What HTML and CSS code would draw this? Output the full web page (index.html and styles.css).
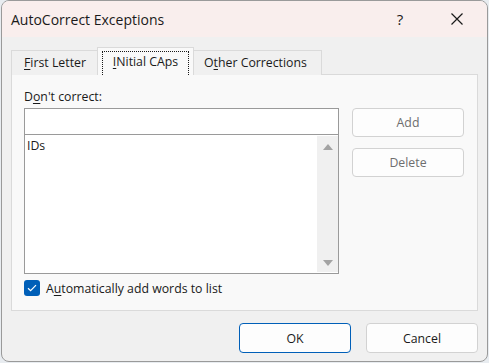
FILE: index.html
```html
<!DOCTYPE html>
<html lang="en">
<head>
  <meta charset="UTF-8" />
  <title>AutoCorrect Exceptions</title>
  <link rel="stylesheet" href="styles.css">
</head>
<body>

  <div class="window">
    <div class="titlebar">
      <span class="title">AutoCorrect Exceptions</span>
      <span class="help">?</span>
      <span class="close">
        <svg width="12" height="12" viewBox="0 0 12 12"><path d="M0.5 0.5 L11.5 11.5 M11.5 0.5 L0.5 11.5" stroke="#1a1a1a" stroke-width="1.2" fill="none"/></svg>
      </span>
    </div>

    <div class="content">
      <div class="tabs">
        <div class="tab"><u>F</u>irst Letter</div>
        <div class="tab active"><span class="focus"><u>I</u>Nitial CAps</span></div>
        <div class="tab">O<u>t</u>her Corrections</div>
      </div>

      <div class="panel">
        <div class="label">D<u>o</u>n't correct:</div>
        <div class="editor">
          <div class="fields">
            <div class="textbox"></div>
            <div class="listbox">
              <div class="items">IDs</div>
              <div class="scrollbar">
                <span class="arrow up"></span>
                <span class="arrow down"></span>
              </div>
            </div>
          </div>
          <div class="side">
            <button class="btn disabled">Add</button>
            <button class="btn disabled">Delete</button>
          </div>
        </div>
        <label class="check">
          <span class="box">
            <svg width="10" height="8" viewBox="0 0 10 8"><path d="M1 4.2 L3.6 6.6 L9 1.2" stroke="#fff" stroke-width="1.2" fill="none"/></svg>
          </span>
          <span>A<u>u</u>tomatically add words to list</span>
        </label>
      </div>

      <div class="actions">
        <button class="btn default">OK</button>
        <button class="btn">Cancel</button>
      </div>
    </div>
  </div>

</body>
</html>
```

FILE: styles.css
```css
* { box-sizing: border-box; margin: 0; padding: 0; }
html, body {
  width: 100%; height: 100%;
  background: #e8ecf0;
  font-family: 'Open Sans', 'Noto Sans', sans-serif;
  font-size: 12.3px;
  color: #1a1a1a;
  overflow: hidden;
}
u { text-underline-offset: 2px; }
.window {
  margin-left: 1px;
  width: 487px;
  height: 362px;
  background: #f0f0f0;
  border: 1px solid #9a9a9a;
  border-radius: 8px;
  overflow: hidden;
  display: flex;
  flex-direction: column;
}
.titlebar {
  height: 36px;
  background: #f9eeed;
  display: flex;
  align-items: center;
  padding-left: 9px;
}
.title {
  font-size: 14px;
  flex: 1;
}
.help {
  font-size: 15px;
  width: 46px;
  text-align: center;
  margin-right: 11px;
}
.close {
  width: 46px;
  display: flex;
  justify-content: center;
  margin-right: 7px;
}
.content {
  padding: 10px 9px 0 9px;
  display: flex;
  flex-direction: column;
}
.tabs {
  display: flex;
  align-items: flex-end;
  height: 28px;
  margin-bottom: -1px;
  position: relative;
  z-index: 1;
}
.tab {
  height: 25px;
  padding: 0 0 0 12px;
  line-height: 24px;
  white-space: nowrap;
  background: #f0f0f0;
  border: 1px solid #dadada;
  border-bottom: none;
}
.tab:first-child { width: 86px; border-right: none; }
.tab:last-child { width: 128px; border-left: none; padding-left: 10px; }
.tab.active {
  height: 28px;
  width: 97px;
  background: #f9f9f9;
  padding: 3px 4px 0;
  line-height: 20px;
}
.focus {
  display: block;
  border: 1px dotted #1a1a1a;
  border-bottom: none;
  height: 24px;
  text-align: center;
  line-height: 20px;
}
.panel {
  width: 467px;
  height: 237px;
  background: #f9f9f9;
  border: 1px solid #dadada;
  padding: 13px 12px 0;
}
.label { height: 20px; line-height: 17px; }
.editor {
  display: flex;
  gap: 13px;
}
.fields { width: 315px; }
.textbox {
  height: 27px;
  background: #fff;
  border: 1px solid #9a9a9a;
}
.listbox {
  height: 139px;
  background: #fff;
  border: 1px solid #9a9a9a;
  border-top: none;
  display: flex;
}
.items {
  flex: 1;
  padding: 2px 2px;
  line-height: 18px;
}
.scrollbar {
  width: 21px;
  margin: 1px 0;
  background: #f0f0f0;
  display: flex;
  flex-direction: column;
  justify-content: space-between;
  align-items: center;
  padding: 8px 0 6px;
}
.arrow {
  width: 0; height: 0;
  border-left: 5px solid transparent;
  border-right: 5px solid transparent;
}
.arrow.up { border-bottom: 6px solid #a3a3a3; }
.arrow.down { border-top: 6px solid #a3a3a3; }
.side {
  display: flex;
  flex-direction: column;
  gap: 11px;
}
.btn {
  width: 112px;
  height: 29px;
  background: #fdfdfd;
  border: 1px solid #d2d2d2;
  border-radius: 4px;
  font-family: inherit;
  font-size: 12.3px;
  color: #1a1a1a;
}
.btn.disabled { color: #6e6e6e; }
.btn.default { border-color: #005fb8; }
.check {
  display: flex;
  align-items: center;
  gap: 6px;
  margin-top: 6px;
  height: 16px;
}
.box {
  width: 16px; height: 16px;
  background: #005fb8;
  border-radius: 3px;
  display: flex;
  align-items: center;
  justify-content: center;
}
.actions {
  display: flex;
  justify-content: flex-end;
  gap: 15px;
  margin-top: 12px;
}
.actions .btn { height: 30px; }
```
